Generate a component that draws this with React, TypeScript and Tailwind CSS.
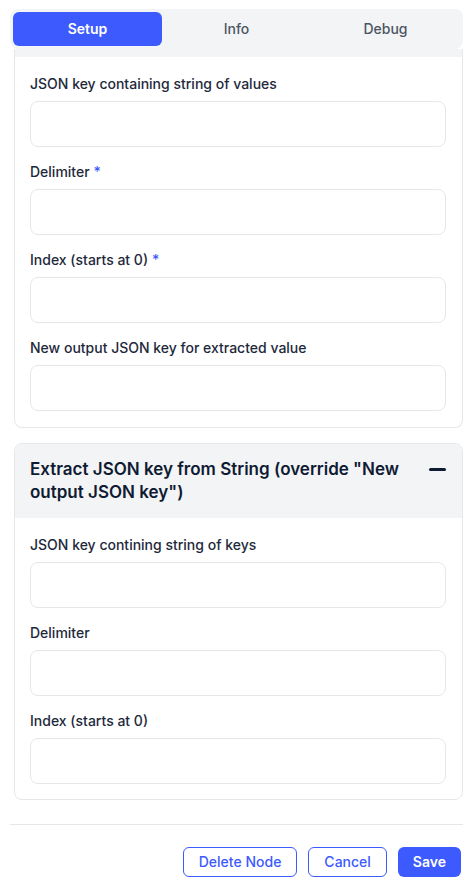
import React from "react";

type Field = { label: string; required?: boolean };

const firstFields: Field[] = [
  { label: "JSON key containing string of values" },
  { label: "Delimiter", required: true },
  { label: "Index (starts at 0)", required: true },
  { label: "New output JSON key for extracted value" },
];

const secondFields: Field[] = [
  { label: "JSON key contining string of keys" },
  { label: "Delimiter" },
  { label: "Index (starts at 0)" },
];

function FieldRow({ label, required }: Field) {
  return (
    <div className="flex flex-col">
      <label className="text-sm leading-5 font-medium text-[#1e293b]">
        {label}
        {required && <span className="ml-1 text-[#3d5afe]">*</span>}
      </label>
      <input
        type="text"
        className="mt-[7px] h-[46px] w-full rounded-lg border border-[#e5e7eb] bg-white px-3 outline-none"
      />
    </div>
  );
}

export default function App() {
  const tabs = ["Setup", "Info", "Debug"];
  return (
    <div
      className="min-h-screen w-[476px] bg-white pl-[10px] pr-[13px] pt-[9px]"
      style={{ fontFamily: "Inter, 'Noto Sans', sans-serif" }}
    >
      <div className="flex h-[40px] rounded-lg bg-[#f3f4f6] p-[3px]">
        {tabs.map((t, i) => (
          <button
            key={t}
            className={
              i === 0
                ? "flex-1 rounded-md bg-[#3d5afe] text-sm font-semibold text-white"
                : "flex-1 rounded-md text-sm font-medium text-[#4b5563]"
            }
          >
            {t}
          </button>
        ))}
      </div>

      <div className="ml-[4px] border-x border-b border-[#e5e7eb] rounded-b-lg">
        <div className="h-[8px] bg-[#f3f4f6]" />
        <div className="flex flex-col gap-[15px] pl-[15px] pr-4 pt-[17px] pb-4">
          {firstFields.map((f) => (
            <FieldRow key={f.label} {...f} />
          ))}
        </div>
      </div>

      <div className="ml-[4px] mt-[15px] overflow-hidden rounded-lg border border-[#e5e7eb]">
        <div className="flex items-start justify-between bg-[#f3f4f6] pl-[15px] pr-4 py-[14px]">
          <h3 className="max-w-[380px] text-[17px] leading-[23px] font-semibold text-[#0f1b33]">
            Extract JSON key from String (override "New output JSON key")
          </h3>
          <div className="mt-[10px] h-[3px] w-[17px] rounded-sm bg-[#0f1b33]" />
        </div>
        <div className="flex flex-col gap-[15px] pl-[15px] pr-4 pt-[17px] pb-[15px]">
          {secondFields.map((f) => (
            <FieldRow key={f.label} {...f} />
          ))}
        </div>
      </div>

      <div className="mt-6 border-t border-[#e5e7eb]" />

      <div className="mt-[22px] flex justify-end gap-[11px] pr-[2px]">
        <button className="h-[30px] rounded-md border border-[#3d5afe] px-[15px] text-sm font-medium text-[#3d5afe]">
          Delete Node
        </button>
        <button className="h-[30px] rounded-md border border-[#3d5afe] px-[15px] text-sm font-medium text-[#3d5afe]">
          Cancel
        </button>
        <button className="h-[30px] rounded-md bg-[#3d5afe] px-[15px] text-sm font-semibold text-white">
          Save
        </button>
      </div>
    </div>
  );
}
